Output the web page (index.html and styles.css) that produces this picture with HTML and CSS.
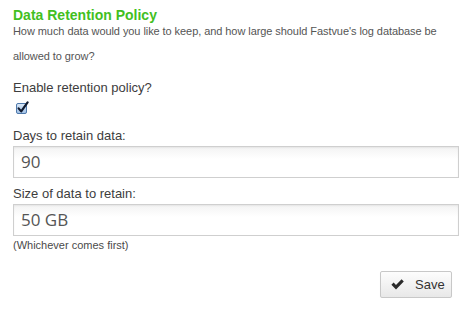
FILE: index.html
```html
<!DOCTYPE html>
<html>
<head>
<meta charset="utf-8">
<link rel="stylesheet" href="styles.css">
</head>
<body>
<div class="page">
  <h1 class="title">Data Retention Policy</h1>
  <p class="desc">How much data would you like to keep, and how large should Fastvue's log database be allowed to grow?</p>
  <div class="label label-first">Enable retention policy?</div>
  <div class="check">
    <svg width="14" height="14" viewBox="0 0 14 14">
      <defs>
        <linearGradient id="cb" x1="0" y1="0" x2="0" y2="1">
          <stop offset="0" stop-color="#dce9f7"/>
          <stop offset="1" stop-color="#9fc0e6"/>
        </linearGradient>
      </defs>
      <rect x="1.5" y="2.5" width="10" height="10" rx="1.5" fill="url(#cb)" stroke="#4f79ab" stroke-width="1"/>
      <path d="M3.6 7.4 L6.2 10.4 L12.6 1.4" fill="none" stroke="#111a2e" stroke-width="2.2" stroke-linecap="round" stroke-linejoin="round"/>
    </svg>
  </div>
  <div class="label">Days to retain data:</div>
  <div class="field">90</div>
  <div class="label label-tight">Size of data to retain:</div>
  <div class="field">50 GB</div>
  <div class="note">(Whichever comes first)</div>
  <div class="actions">
    <div class="btn">
      <svg class="btn-icon" width="13" height="11" viewBox="0 0 13 11">
        <path d="M0.4 5.8 L2.6 3.6 L5 6 L10.6 0.2 L12.8 2.4 L5 10.4 Z" fill="#2b2b2b"/>
      </svg>
      <span>Save</span>
    </div>
  </div>
</div>
</body>
</html>
```

FILE: styles.css
```css
html, body {
  margin: 0;
  padding: 0;
  background: #ffffff;
}

.page {
  width: 446px;
  padding: 0 15px 0 13px;
  font-family: "Liberation Sans", Arial, sans-serif;
  color: #3a3a3a;
}

.title {
  margin: 0;
  padding-top: 8px;
  font-size: 14px;
  line-height: 14px;
  font-weight: bold;
  color: #42bf1f;
}

.desc {
  margin: -3px 0 0 0;
  font-size: 11px;
  line-height: 25px;
  letter-spacing: -0.07px;
  color: #555555;
}

.label {
  margin-top: 13px;
  font-size: 13px;
  line-height: 16px;
  color: #3d3d3d;
}

.label-first {
  margin-top: 11px;
}

.label-tight {
  margin-top: 8px;
}

.check {
  margin-top: 5px;
  margin-left: 2px;
  height: 14px;
}

.check svg {
  display: block;
}

.field {
  box-sizing: border-box;
  margin-top: 2px;
  height: 32px;
  padding: 0 7px;
  border: 1px solid #cfcfcf;
  background: linear-gradient(#f3f3f3, #ffffff 40%);
  box-shadow: inset 0 1px 2px rgba(0, 0, 0, 0.06);
  font-family: "Open Sans", sans-serif;
  font-size: 17px;
  line-height: 30px;
  color: #555555;
}

.note {
  margin-top: 2px;
  font-size: 11px;
  line-height: 14px;
  color: #4a4a4a;
}

.actions {
  display: flex;
  justify-content: flex-end;
  margin-top: 19px;
  padding-right: 7px;
}

.btn {
  box-sizing: border-box;
  display: flex;
  align-items: center;
  gap: 11px;
  width: 72px;
  height: 27px;
  padding-left: 10px;
  border: 1px solid #c8c8c8;
  border-radius: 2px;
  background: linear-gradient(#fdfdfd, #e8e8e8);
  box-shadow: 0 1px 1px rgba(0, 0, 0, 0.05);
  font-size: 13px;
  color: #333333;
}

.btn-icon {
  display: block;
}
```
